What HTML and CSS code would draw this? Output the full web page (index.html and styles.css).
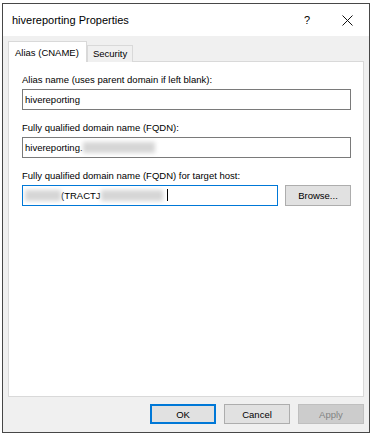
FILE: index.html
```html
<!DOCTYPE html>
<html lang="en">
<head>
  <meta charset="UTF-8" />
  <meta name="viewport" content="width=device-width, initial-scale=1.0"/>
  <title>hivereporting Properties</title>
  <link rel="stylesheet" href="styles.css">
</head>
<body>
  <div class="window">
    <div class="titlebar">
      <span class="title">hivereporting Properties</span>
      <span class="help">?</span>
      <span class="close">
        <svg width="11" height="11" viewBox="0 0 11 11">
          <path d="M0.5 0.5 L10.5 10.5 M10.5 0.5 L0.5 10.5" stroke="#111" stroke-width="1" fill="none"/>
        </svg>
      </span>
    </div>
    <div class="content">
      <div class="tabs">
        <div class="tab active">Alias (CNAME)</div>
        <div class="tab">Security</div>
      </div>
      <div class="panel">
        <label class="field-label">Alias name (uses parent domain if left blank):</label>
        <div class="input">hivereporting</div>

        <label class="field-label">Fully qualified domain name (FQDN):</label>
        <div class="input">hivereporting.<span class="redact" style="width: 72px"></span></div>

        <label class="field-label">Fully qualified domain name (FQDN) for target host:</label>
        <div class="row">
          <div class="input focused"><span class="redact" style="width: 36px"></span>(TRACTJ<span class="redact" style="width: 62px"></span><span class="caret"></span></div>
          <button class="btn">Browse...</button>
        </div>
      </div>
    </div>
    <div class="footer">
      <button class="btn default">OK</button>
      <button class="btn">Cancel</button>
      <button class="btn" disabled>Apply</button>
    </div>
  </div>
</body>
</html>
```

FILE: styles.css
```css
body {
  margin: 0;
  background: #fff;
  font-family: "Liberation Sans", Arial, sans-serif;
  font-size: 9.5px;
  color: #000;
}
.window {
  margin: 3px 0 0 2px;
  width: 366px;
  height: 428px;
  border: 1px solid #474747;
  background: #f0f0f0;
  display: flex;
  flex-direction: column;
}
.titlebar {
  height: 32px;
  background: #fff;
  display: flex;
  align-items: center;
  padding: 0 16px 0 9px;
}
.title {
  font-size: 11px;
  flex: 1;
}
.help {
  font-size: 11px;
  margin-right: 32px;
}
.close svg {
  display: block;
}
.content {
  padding: 6px 5px 0 5px;
}
.tabs {
  display: flex;
  align-items: flex-end;
  height: 20px;
  margin-bottom: -1px;
  padding-left: 1px;
}
.tab {
  height: 16px;
  line-height: 15px;
  padding: 0 5px;
  border: 1px solid #d9d9d9;
  border-bottom: none;
  background: #f0f0f0;
}
.tab.active {
  height: 20px;
  line-height: 21px;
  padding: 0 7px 0 6px;
  margin-left: -1px;
  background: #fff;
  position: relative;
  z-index: 1;
}
.panel {
  height: 323px;
  background: #fff;
  border: 1px solid #d9d9d9;
  padding: 11px 12px 0 13px;
}
.field-label {
  display: block;
  line-height: 13px;
  margin-bottom: 3px;
}
.input {
  box-sizing: border-box;
  height: 21px;
  line-height: 19px;
  border: 1px solid #7a7a7a;
  padding: 0 2px;
  margin-bottom: 11px;
  white-space: nowrap;
  overflow: hidden;
}
.input.focused {
  border-color: #0078d7;
  flex: 1;
  margin-bottom: 0;
}
.redact {
  display: inline-block;
  height: 11px;
  vertical-align: -2px;
  background: #d6d6d6;
  filter: blur(2px);
}
.caret {
  display: inline-block;
  width: 1px;
  height: 12px;
  margin-left: 4px;
  vertical-align: -2px;
  background: #000;
}
.row {
  display: flex;
  gap: 7px;
}
.btn {
  box-sizing: border-box;
  width: 66px;
  height: 20px;
  padding: 0;
  font-family: inherit;
  font-size: 9.5px;
  color: #000;
  background: #e1e1e1;
  border: 1px solid #adadad;
}
.btn.default {
  border: 2px solid #0078d7;
}
.btn:disabled {
  color: #838383;
  background: #cccccc;
  border-color: #bfbfbf;
}
.row .btn {
  height: 21px;
}
.footer {
  display: flex;
  justify-content: flex-end;
  gap: 8px;
  padding: 7px 5px 0 0;
}
```
